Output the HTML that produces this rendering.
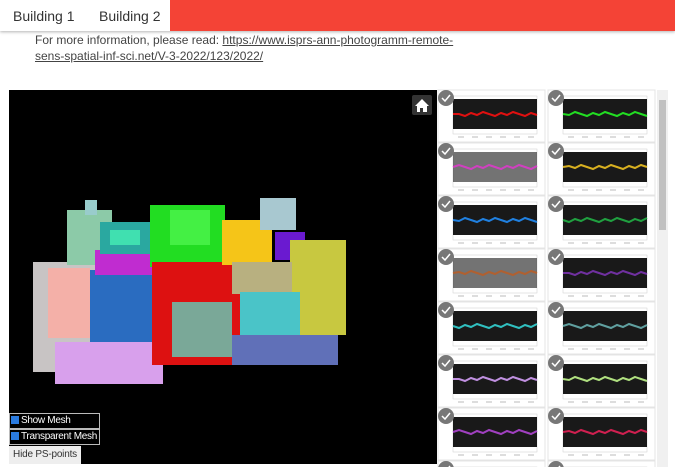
<!DOCTYPE html><html><head><style>
html,body{margin:0;width:675px;height:467px;overflow:hidden}
body{background:#fff;font-family:"Liberation Sans",sans-serif;position:relative}
.hdr{position:absolute;left:0;top:0;width:675px;height:31px;background:#f44336;box-shadow:0 1px 3px rgba(0,0,0,.3)}
.tabs{position:absolute;left:0;top:0;width:170px;height:31px;background:#fff}
.tab{position:absolute;top:8px;font-size:14px;color:#333}
.info{position:absolute;left:35px;top:32px;font-size:12px;line-height:16px;color:#444;width:420px}
.info a{color:#444;text-decoration:underline}
.viewer{position:absolute;left:9px;top:90px;width:428px;height:374px;background:#000}
.cb{position:absolute;left:9px;height:14px;border:1px solid #bbb;color:#fff;font-size:10px;letter-spacing:-0.3px;line-height:14px;background:#000;white-space:nowrap;overflow:hidden}
.cb i{display:inline-block;width:8px;height:8px;background:#2a7be0;margin:0 2px 0 1px;vertical-align:-1px}
.btn{position:absolute;left:9px;top:446px;width:72px;height:18px;background:#eee;font-size:10px;letter-spacing:-0.2px;line-height:18px;text-align:center;color:#333;white-space:nowrap;overflow:hidden}
</style></head><body>
<div class="hdr"></div><div class="tabs"><span class="tab" style="left:13px">Building 1</span><span class="tab" style="left:99px">Building 2</span></div>
<div class="info">For more information, please read: <a>https://www.isprs-ann-photogramm-remote-sens-spatial-inf-sci.net/V-3-2022/123/2022/</a></div>
<div class="viewer"></div>
<svg style="position:absolute;left:0;top:0" width="675" height="467">
<g>
<rect x="33" y="262" width="64" height="110" fill="#c8c4c4"/>
<rect x="48" y="268" width="42" height="70" fill="#f4b0a8"/>
<rect x="67" y="210" width="45" height="55" fill="#8ccaa8"/>
<rect x="85" y="200" width="12" height="15" fill="#9cc"/>
<rect x="90" y="270" width="66" height="75" fill="#2a6cc0"/>
<rect x="95" y="250" width="58" height="25" fill="#c02cd0"/>
<rect x="100" y="222" width="52" height="32" fill="#2aa8a0"/>
<rect x="110" y="230" width="30" height="15" fill="#40e0b0"/>
<rect x="55" y="342" width="108" height="42" fill="#d8a0ec"/>
<rect x="150" y="205" width="75" height="62" fill="#22dd22"/>
<rect x="170" y="210" width="40" height="35" fill="#44f044"/>
<rect x="152" y="262" width="90" height="103" fill="#dd1111"/>
<rect x="172" y="302" width="60" height="55" fill="#7aa898"/>
<rect x="222" y="220" width="50" height="45" fill="#f5c518"/>
<rect x="260" y="198" width="36" height="32" fill="#a8c8d0"/>
<rect x="275" y="232" width="30" height="28" fill="#6a1ad0"/>
<rect x="290" y="240" width="56" height="95" fill="#c8c840"/>
<rect x="232" y="262" width="60" height="32" fill="#b8b080"/>
<rect x="240" y="292" width="60" height="50" fill="#4ac4c8"/>
<rect x="232" y="335" width="106" height="30" fill="#6070b8"/>
</g>
<rect x="412" y="95" width="20" height="20" rx="2" fill="#333"/>
<path d="M415 106 L422 99 L429 106 Z M417 105 h10 v7 h-10 Z" fill="#fff"/>
<rect x="420" y="108" width="3" height="4" fill="#333"/>
<rect x="437" y="90" width="220" height="377" fill="#fff"/>
<rect x="657" y="90" width="11" height="377" fill="#f0f0f0"/>
<rect x="659" y="100" width="7" height="130" fill="#c1c1c1"/>
<g id="cells"></g>
</svg>
<div class="cb" style="top:413px;width:89px"><i></i>Show Mesh</div>
<div class="cb" style="top:429px;width:89px"><i></i>Transparent Mesh</div>
<div class="btn">Hide PS-points</div>
<script>
var cols=[["#e01010","#22dd22"],["#d040c0","#d8b020"],["#2080e0","#20a040"],["#b06030","#7030a0"],["#30c0c0","#60a0a0"],["#c090e0","#b0e080"],["#a040c0","#d02050"],["#888","#888"]];
var g=document.getElementById('cells'),s='';
for(var r=0;r<8;r++)for(var c=0;c<2;c++){
var x=438+c*110,y=90+r*53;
s+='<rect x="'+x+'" y="'+y+'" width="107" height="52" fill="#fff" stroke="#e4e4e4"/>';
var op=(r==1&&c==0)||(r==3&&c==0)?0.55:0.9;
s+='<rect x="'+(x+15)+'" y="'+(y+6)+'" width="84" height="38" fill="#fff" stroke="#ccc" stroke-width=".5"/>';
s+='<rect x="'+(x+15)+'" y="'+(y+9)+'" width="84" height="30" fill="#000" opacity="'+op+'"/>';
var p='M'+(x+15)+' '+(y+24);for(var k=1;k<=14;k++)p+=' L'+(x+15+k*6)+' '+(y+24+((k*7+r*3+c)%5)-2);
s+='<path d="'+p+'" stroke="'+cols[r][c]+'" stroke-width="2" fill="none"/>';
s+='<line x1="'+(x+20)+'" y1="'+(y+47)+'" x2="'+(x+98)+'" y2="'+(y+47)+'" stroke="#bbb" stroke-width="1" stroke-dasharray="6 8"/>';
s+='<circle cx="'+(x+8)+'" cy="'+(y+8)+'" r="8" fill="#777"/><path d="M'+(x+4)+' '+(y+8)+' l3 3 l5 -6" stroke="#fff" stroke-width="1.5" fill="none"/>';}
g.innerHTML=s;
</script>
</body></html>
